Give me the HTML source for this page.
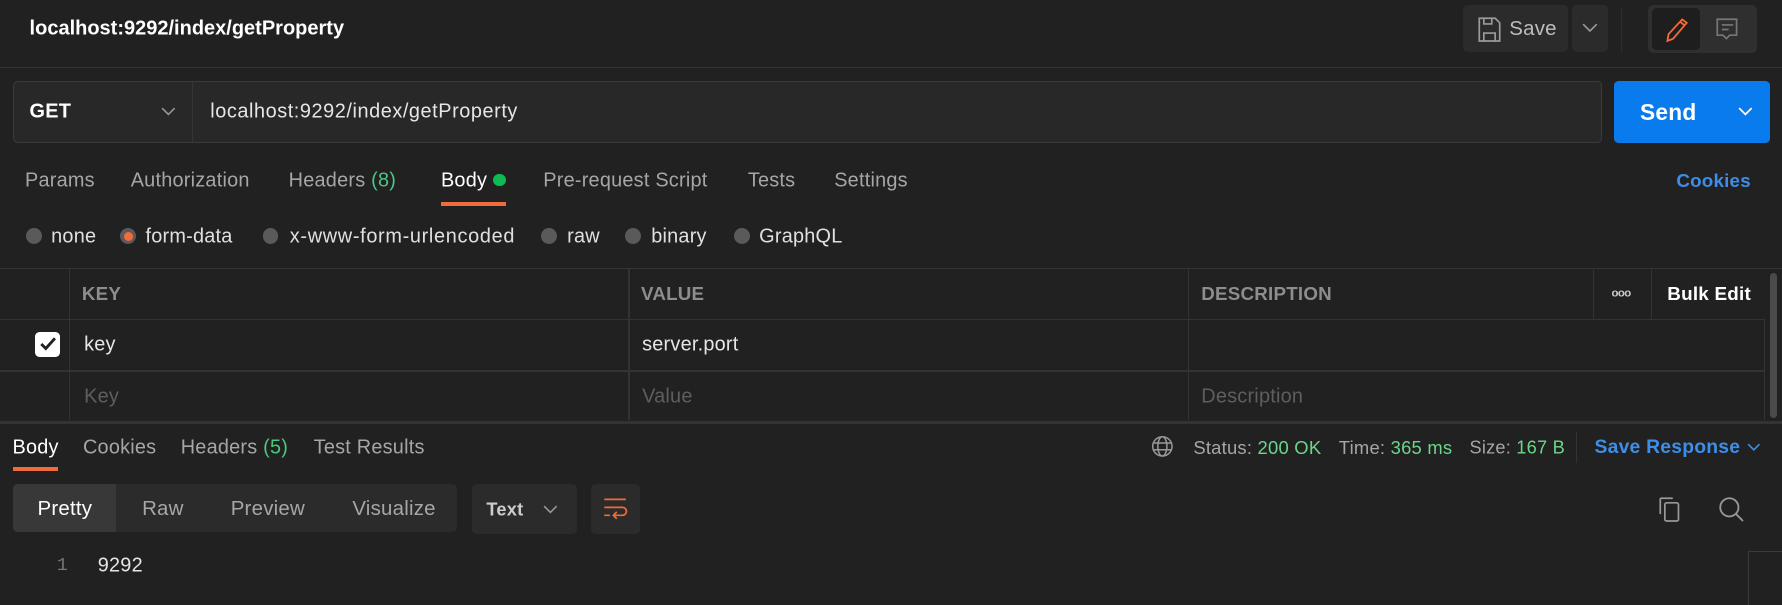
<!DOCTYPE html>
<html><head><meta charset="utf-8"><style>
html,body{margin:0;padding:0;background:#212121;width:1782px;height:605px;overflow:hidden}
#w{zoom:1.1365;position:relative;width:1568px;height:532px;font-family:"Liberation Sans",sans-serif;color:#a6a6a6;font-size:17.5px;letter-spacing:0.2px}
.a{position:absolute;white-space:nowrap}
.c{transform:translateY(-45%)}
.line{position:absolute;background:#353535}
.g{color:#49c882}
.rad{position:absolute;width:14px;height:14px;border-radius:50%;background:#5a5a5a;top:201px}
</style></head><body><div id="w">
<div class="a c" style="left:26px;top:25px;color:#fff;font-weight:bold;font-size:17.6px;letter-spacing:0">localhost:9292/index/getProperty</div>
<div class="line" style="left:0;top:59px;width:1568px;height:1px"></div>
<div class="a" style="left:1287px;top:4px;width:93px;height:42px;background:#2b2b2b;border-radius:4px"></div>
<svg class="a" style="left:1300px;top:14px" width="22" height="24" viewBox="0 0 22 24" fill="none" stroke="#9a9a9a" stroke-width="1.5"><path d="M2 2h14l4 4v16H2z"/><path d="M6 2v5h7V2M6 22v-7h10v7"/></svg>
<div class="a c" style="left:1328px;top:25px;color:#bdbdbd;font-size:18px">Save</div>
<div class="a" style="left:1383px;top:4px;width:32px;height:42px;background:#2b2b2b;border-radius:4px"></div>
<svg class="a" style="left:1392px;top:20px" width="14" height="9"><path d="M1 1l6 6 6-6" fill="none" stroke="#9a9a9a" stroke-width="1.4"/></svg>
<div class="line" style="left:1426px;top:6px;width:1px;height:40px;background:#2e2e2e"></div>
<div class="a" style="left:1450px;top:4px;width:96px;height:43px;background:#2f2f2f;border-radius:5px"></div>
<div class="a" style="left:1454px;top:7px;width:42px;height:37px;background:#1e1e1e;border-radius:4px"></div>
<svg class="a" style="left:1464px;top:14px" width="22" height="24" viewBox="0 0 22 24" fill="none" stroke="#f26b3a" stroke-width="1.6"><path d="M3 22l1-6L16 3l4 3L8 20z M14 5l4 3"/></svg>
<svg class="a" style="left:1509px;top:15px" width="22" height="22" viewBox="0 0 22 22" fill="none" stroke="#777" stroke-width="1.5"><path d="M2 2h17v14h-6l-3 3-3-3H2z M6 7h10M6 11h6"/></svg>

<div class="a" style="left:11px;top:71px;width:1397px;height:53px;background:#282828;border:1px solid #3a3a3a;border-radius:4px"></div>
<div class="line" style="left:169px;top:72px;width:1px;height:53px;background:#353535"></div>
<div class="a c" style="left:26px;top:98px;color:#fff;font-weight:bold;font-size:17.5px">GET</div>
<svg class="a" style="left:142px;top:94px" width="13" height="8"><path d="M1 1l5.5 5.5L12 1" fill="none" stroke="#999" stroke-width="1.4"/></svg>
<div class="a c" style="left:185px;top:98px;color:#e6e6e6;letter-spacing:0.5px">localhost:9292/index/getProperty</div>
<div class="a" style="left:1420px;top:71px;width:137px;height:55px;background:#097bed;border-radius:4px"></div>
<div class="a c" style="left:1443px;top:98px;color:#fff;font-weight:bold;font-size:20px">Send</div>
<svg class="a" style="left:1529px;top:94px" width="13" height="8"><path d="M1 1l5.5 5.5L12 1" fill="none" stroke="#fff" stroke-width="1.5"/></svg>

<div class="a c" style="left:22px;top:158px">Params</div>
<div class="a c" style="left:115px;top:158px">Authorization</div>
<div class="a c" style="left:254px;top:158px">Headers <span class="g">(8)</span></div>
<div class="a c" style="left:388px;top:158px;color:#fff">Body</div>
<div class="a" style="left:434px;top:153px;width:11px;height:11px;border-radius:50%;background:#0cbb52"></div>
<div class="a" style="left:388px;top:178px;width:57px;height:3px;background:#f26b3a"></div>
<div class="a c" style="left:478px;top:158px">Pre-request Script</div>
<div class="a c" style="left:658px;top:158px">Tests</div>
<div class="a c" style="left:734px;top:158px">Settings</div>
<div class="a c" style="left:1475px;top:158px;color:#3d8ee8;font-weight:bold;font-size:16.5px">Cookies</div>

<div class="rad" style="left:23px"></div><div class="a c" style="left:45px;top:208px;color:#e0e0e0">none</div>
<div class="rad" style="left:106px;background:#5a5a5a"><div style="margin:3px;width:8px;height:8px;border-radius:50%;background:#f26b3a"></div></div><div class="a c" style="left:128px;top:208px;color:#e0e0e0">form-data</div>
<div class="rad" style="left:231px"></div><div class="a c" style="left:255px;top:208px;color:#e0e0e0;letter-spacing:0.6px">x-www-form-urlencoded</div>
<div class="rad" style="left:476px"></div><div class="a c" style="left:499px;top:208px;color:#e0e0e0">raw</div>
<div class="rad" style="left:550px"></div><div class="a c" style="left:573px;top:208px;color:#e0e0e0">binary</div>
<div class="rad" style="left:646px"></div><div class="a c" style="left:668px;top:208px;color:#e0e0e0">GraphQL</div>

<div class="line" style="left:0;top:236px;width:1568px;height:1px"></div>
<div class="line" style="left:0;top:281px;width:1552px;height:1px;background:#333"></div>
<div class="line" style="left:0;top:326px;width:1552px;height:1px;background:#333"></div>
<div class="line" style="left:0;top:370px;width:1568px;height:3px;background:#333"></div>
<div class="line" style="left:61px;top:237px;width:1px;height:133px;background:#333"></div>
<div class="line" style="left:553px;top:237px;width:1px;height:133px;background:#333"></div>
<div class="line" style="left:1045px;top:237px;width:1px;height:133px;background:#333"></div>
<div class="line" style="left:1402px;top:237px;width:1px;height:44px;background:#333"></div>
<div class="line" style="left:1453px;top:237px;width:1px;height:44px;background:#333"></div>
<div class="line" style="left:1552px;top:281px;width:1px;height:89px;background:#333"></div>
<div class="a" style="left:1557px;top:240px;width:7px;height:128px;background:#4a4a4a;border-radius:4px"></div>
<div class="a c" style="left:72px;top:258px;color:#8d8d8d;font-weight:bold;font-size:16.5px">KEY</div>
<div class="a c" style="left:564px;top:258px;color:#8d8d8d;font-weight:bold;font-size:16.5px">VALUE</div>
<div class="a c" style="left:1057px;top:258px;color:#8d8d8d;font-weight:bold;font-size:16.5px">DESCRIPTION</div>
<div class="a c" style="left:1418px;top:258px;color:#ccc;font-size:10px;letter-spacing:-0.5px;font-weight:bold">ooo</div>
<div class="a c" style="left:1467px;top:258px;color:#fff;font-weight:bold;font-size:16.6px">Bulk Edit</div>
<div class="a" style="left:31px;top:292px;width:22px;height:22px;background:#fff;border-radius:4px"></div>
<svg class="a" style="left:34px;top:296px" width="16" height="14"><path d="M2 7l4 4 8-9" fill="none" stroke="#212121" stroke-width="2.5"/></svg>
<div class="a c" style="left:74px;top:303px;color:#e6e6e6">key</div>
<div class="a c" style="left:565px;top:303px;color:#e6e6e6">server.port</div>
<div class="a c" style="left:74px;top:348px;color:#5e5e5e">Key</div>
<div class="a c" style="left:565px;top:348px;color:#5e5e5e">Value</div>
<div class="a c" style="left:1057px;top:348px;color:#5e5e5e">Description</div>

<div class="a c" style="left:11px;top:393px;color:#fff">Body</div>
<div class="a" style="left:11px;top:411px;width:40px;height:3px;background:#f26b3a"></div>
<div class="a c" style="left:73px;top:393px">Cookies</div>
<div class="a c" style="left:159px;top:393px">Headers <span class="g">(5)</span></div>
<div class="a c" style="left:276px;top:393px">Test Results</div>
<svg class="a" style="left:1013px;top:383px" width="20" height="20" viewBox="0 0 20 20" fill="none" stroke="#999" stroke-width="1.3"><circle cx="10" cy="10" r="8.5"/><ellipse cx="10" cy="10" rx="4" ry="8.5"/><path d="M2 7h16M2 13h16"/></svg>
<div class="a c" style="left:1050px;top:393px;font-size:16.2px">Status: <span style="color:#6bd68b">200 OK</span></div>
<div class="a c" style="left:1178px;top:393px;font-size:16.2px">Time: <span style="color:#6bd68b">365 ms</span></div>
<div class="a c" style="left:1293px;top:393px;font-size:16px">Size: <span style="color:#6bd68b">167 B</span></div>
<div class="line" style="left:1387px;top:380px;width:1px;height:27px;background:#333"></div>
<div class="a c" style="left:1403px;top:393px;color:#3d8ee8;font-weight:bold;font-size:17px">Save Response</div>
<svg class="a" style="left:1537px;top:390px" width="12" height="8"><path d="M1 1l5 5 5-5" fill="none" stroke="#3d8ee8" stroke-width="1.4"/></svg>

<div class="a" style="left:11px;top:426px;width:391px;height:42px;background:#2b2b2b;border-radius:4px"></div>
<div class="a" style="left:11px;top:426px;width:91px;height:42px;background:#383838;border-radius:4px 0 0 4px"></div>
<div class="a c" style="left:33px;top:447px;color:#fff;font-size:18px">Pretty</div>
<div class="a c" style="left:125px;top:447px;font-size:18px">Raw</div>
<div class="a c" style="left:203px;top:447px;font-size:18px">Preview</div>
<div class="a c" style="left:310px;top:447px;font-size:18px">Visualize</div>
<div class="a" style="left:415px;top:426px;width:93px;height:44px;background:#2b2b2b;border-radius:4px"></div>
<div class="a c" style="left:428px;top:448px;color:#ccc;font-weight:bold;font-size:16px">Text</div>
<svg class="a" style="left:478px;top:444px" width="13" height="8"><path d="M1 1l5.5 5.5L12 1" fill="none" stroke="#999" stroke-width="1.4"/></svg>
<div class="a" style="left:520px;top:426px;width:43px;height:44px;background:#2b2b2b;border-radius:4px"></div>
<svg class="a" style="left:530px;top:436px" width="24" height="24" viewBox="0 0 24 24" fill="none" stroke="#f26b3a" stroke-width="1.5"><path d="M2 3h19M2 10h16a3 3 0 0 1 0 7h-7M13 14l-3 3 3 3M2 17h5"/></svg>
<svg class="a" style="left:1459px;top:436px" width="22" height="24" viewBox="0 0 22 24" fill="none" stroke="#999" stroke-width="1.5"><path d="M2 16V3a1 1 0 0 1 1-1h10"/><rect x="6" y="6" width="12" height="16" rx="1.5"/></svg>
<svg class="a" style="left:1512px;top:436px" width="24" height="24" viewBox="0 0 24 24" fill="none" stroke="#999" stroke-width="1.6"><circle cx="10" cy="10" r="8"/><path d="M16 16l6 6"/></svg>

<div class="a c" style="left:50px;top:497px;color:#777;font-family:'Liberation Mono',monospace;font-size:16px">1</div>
<div class="a c" style="left:86px;top:497px;color:#e6e6e6;font-size:17.5px">9292</div>
<div class="a" style="left:1538px;top:485px;width:30px;height:60px;border-left:1px solid #3a3a3a;border-top:1px solid #3a3a3a"></div>
</div></body></html>
